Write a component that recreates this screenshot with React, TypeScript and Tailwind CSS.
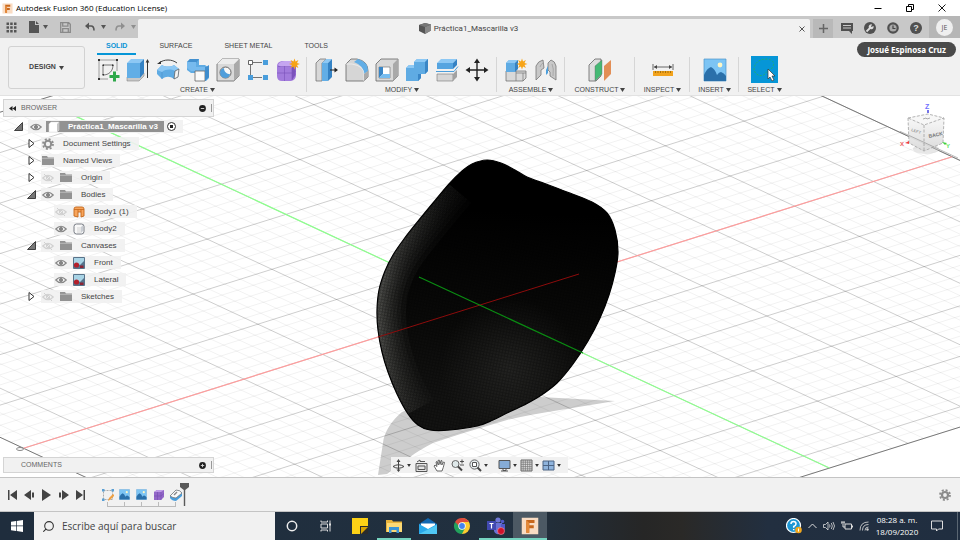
import React from "react";
import { Search } from "lucide-react";

const sans = "font-['Liberation_Sans',Arial,sans-serif]";
const segoe = "font-['Open_Sans','Noto_Sans',sans-serif]";

type SvgProps = { children: React.ReactNode; className?: string; box?: string };

function Svg({ children, className = "size-6", box = "0 0 24 24" }: SvgProps) {
  return (
    <svg viewBox={box} className={`shrink-0 ${className}`} fill="none" aria-hidden="true">
      {children}
    </svg>
  );
}

function Caret({ className = "w-[5px] h-[4px]" }: { className?: string }) {
  return (
    <Svg className={className} box="0 0 5 4">
      <path d="M0 0h5L2.5 4z" fill="currentColor" />
    </Svg>
  );
}

/* ---------- Ribbon icons ---------- */

const SketchIcon = (
  <Svg>
    <path d="M3 2h18M3 2v19h9M21 2v11" stroke="#888" strokeWidth=".8" />
    <path d="M7 7v10M7 7h10M17 7c0 6-4 10-10 10" stroke="#555" strokeWidth=".8" />
    <path d="M2 1h2v2H2zM20 1h2v2h-2zM2 20h2v2H2zM6.500 6.500H8V8H6.500zM16 6.500h1.500V8H16zM6.500 16H8v1.500H6.500z" fill="#333" />
    <path d="M17 13.500h3V17h3.500v3H20v3.500h-3V20h-3.500v-3H17z" fill="#2ea84a" />
  </Svg>
);
const ExtrudeIcon = (
  <Svg>
    <path d="M1 19h13l4-4v3l-5 5H1z" fill="#c9c9c9" stroke="#777" strokeWidth=".5" />
    <path d="M1 5h13v15H1z" fill="#62aee6" />
    <path d="M1 5l4-4h13l-4 4z" fill="#8dc8f4" />
    <path d="M14 5l4-4v14l-4 5z" fill="#3482c4" />
    <path d="M21.500 20V3" stroke="#333" strokeWidth="1" />
    <path d="M19.700 4.500L21.500 1l1.800 3.500z" fill="#333" />
  </Svg>
);
const RevolveIcon = (
  <Svg>
    <path d="M3 5c5-4 13-4 18 0" stroke="#444" strokeWidth="1" />
    <path d="M1 6l4-3v3z" fill="#333" />
    <path d="M1 12l5-5c3 2 9 2 12 0l5 4-1 8-4 2c-4-3-8-3-12 0l-5-5z" fill="#5fabe3" />
    <path d="M1 12l5-5c3 2 9 2 12 0l5 4-4 2c-4-2-9-2-13 1z" fill="#8dc8f4" />
    <path d="M19 13l4-2-1 8-4 2z" fill="#f4f4f4" stroke="#555" strokeWidth=".7" />
    <path d="M6 14v7" stroke="#4f94cb" strokeWidth=".7" />
  </Svg>
);
const SweepIcon = (
  <Svg>
    <path d="M1 4l3-3h9v6h6l4 3v10l-3 3h-5v-8H5l-4-3z" fill="#5fabe3" />
    <path d="M1 4l3-3h9l-3 4v4h10l3-2v3l-3 3H9V7H1z" fill="#4390cf" />
    <path d="M1 4h9v5h9v4H5l-4-3z" fill="#76baee" />
    <path d="M9 13h10v10H9z" fill="#fafafa" stroke="#666" strokeWidth=".8" />
    <path d="M19 13l4-3v9l-4 4z" fill="#3f8ccc" />
  </Svg>
);
const HoleIcon = (
  <Svg>
    <path d="M1 6l5-5h17v17l-5 5H1z" fill="#d9d9d9" stroke="#666" strokeWidth=".8" />
    <path d="M18 6l5-5v17l-5 5z" fill="#a9a9a9" />
    <path d="M1 6l5-5h17l-5 5z" fill="#ececec" />
    <circle cx="9.500" cy="14.500" r="5.500" fill="#f8f8f8" stroke="#555" strokeWidth=".9" />
    <path d="M8 10a5 5 0 1 0 6 6c-3 0-6-2-6-6z" fill="#4f9edb" />
  </Svg>
);
const PatternIcon = (
  <Svg>
    <path d="M4.500 7v10M7 4.500h9M7 19.500h9" stroke="#555" strokeWidth=".8" />
    <path d="M2.500 2.500h4v4h-4z" fill="#fff" stroke="#555" strokeWidth=".9" />
    <path d="M17 2h5v5h-5zM2 17h5v5H2zM17 17h5v5h-5z" fill="#4a9edc" />
  </Svg>
);
function Star({ x, y, s = 5 }: { x: number; y: number; s?: number }) {
  const points = Array.from({ length: 16 }, (_, i) => {
    const radius = i % 2 === 0 ? s : s * 0.5;
    const angle = (i * Math.PI) / 8;
    return `${x + radius * Math.sin(angle)},${y - radius * Math.cos(angle)}`;
  }).join(" ");
  return <polygon points={points} fill="#f7a416" />;
}
const FormIcon = (
  <Svg>
    <path d="M1 8q0-4 5-5h9q5 1 5 5v9q0 5-5 6H6q-5 0-5-5z" fill="#a27bdc" />
    <path d="M2 7q2-4 7-4h6q4 1 4 4l-3 2H5z" fill="#c5a5f0" />
    <path d="M16 9l3.500-2v10L16 22z" fill="#7d53bd" />
    <path d="M8.500 8v15M1 15h15l4-2M16 9v13M2 8.500h14l3.500-2" stroke="#7a52ba" strokeWidth=".6" />
    <Star x={18.500} y={6} s={5.500} />
  </Svg>
);
const PressPullIcon = (
  <Svg>
    <path d="M1 5l4-4h6L7 5v18H1z" fill="#d8d8d8" stroke="#666" strokeWidth=".7" />
    <path d="M7 5h6v18H7z" fill="#62aee6" />
    <path d="M7 5l4-4h6l-4 4z" fill="#8dc8f4" />
    <path d="M13 5l4-4v18l-4 4z" fill="#3482c4" />
    <path d="M15 12h6" stroke="#222" strokeWidth="1" />
    <path d="M19.500 9.500L23 12l-3.500 2.500z" fill="#222" />
  </Svg>
);
const FilletIcon = (
  <Svg>
    <path d="M1 6l5-5h6q11 2 11 12v6l-4 4H1z" fill="#d6d6d6" stroke="#666" strokeWidth=".8" />
    <path d="M9 4l4-3q10 3 10 12l-4 3Q18 7 9 4z" fill="#62aee6" />
    <path d="M1 6h6q12 2 12 10v7" stroke="#f4f4f4" strokeWidth=".7" />
    <path d="M19 16l4-3v6l-4 4z" fill="#aaa" />
  </Svg>
);
const ShellIcon = (
  <Svg>
    <path d="M1 6l5-5h17v17l-5 5H1z" fill="#d9d9d9" stroke="#666" strokeWidth=".8" />
    <path d="M18 6l5-5v17l-5 5z" fill="#a9a9a9" />
    <path d="M4 9h11v11H4z" fill="#fff" stroke="#666" strokeWidth=".6" />
    <path d="M4 9h4v7l-4 4z" fill="#3a86c6" />
    <path d="M8 16h7v4H4z" fill="#77bdf0" />
  </Svg>
);
const CombineIcon = (
  <Svg>
    <path d="M9 4l3-3h11v12l-3 3h-4v4l-3 3H1V10l3-3h5z" fill="#5fabe3" />
    <path d="M9 4l3-3h11l-3 3z" fill="#8dc8f4" />
    <path d="M20 4l3-3v12l-3 3h-4v4l-3 3v-7h7z" fill="#3a86c6" />
    <path d="M1 10l3-3h5v3z" fill="#8dc8f4" />
  </Svg>
);
const SplitIcon = (
  <Svg>
    <path d="M2 5l4-4h16l-4 4z" fill="#8dc8f4" />
    <path d="M2 5h16v6H2z" fill="#55a4e0" />
    <path d="M18 5l4-4v6l-4 4z" fill="#3482c4" />
    <path d="M1 13.500h18l4-5" stroke="#4a9edc" strokeWidth="1" />
    <path d="M2 16h16v7H2z" fill="#d6d6d6" stroke="#777" strokeWidth=".6" />
    <path d="M18 16l4-4v7l-4 4z" fill="#a2a2a2" />
  </Svg>
);
const MoveIcon = (
  <Svg>
    <path d="M12 3v18M3 12h18" stroke="#222" strokeWidth="1.400" />
    <path d="M12 .5l3 4.500H9zM12 23.500l3-4.500H9zM.5 12L5 9v6zM23.500 12L19 9v6z" fill="#222" />
  </Svg>
);
const ComponentIcon = (
  <Svg>
    <path d="M2 13h20v7l-3 3H2z" fill="#d9d9d9" stroke="#666" strokeWidth=".7" />
    <path d="M12 13v10M19 15v8M12 15h10" stroke="#777" strokeWidth=".7" />
    <path d="M2 5l3-3h9l-3 3v9H2z" fill="#5fabe3" />
    <path d="M2 5l3-3h9l-3 3z" fill="#8dc8f4" />
    <path d="M11 5l3-3v9l-3 3z" fill="#3482c4" />
    <Star x={18} y={6} s={5.500} />
  </Svg>
);
const JointIcon = (
  <Svg>
    <path d="M2 8q2-5 7-6l1 8-3 2v5l-5 5z" fill="#c8c8c8" stroke="#777" strokeWidth=".8" />
    <path d="M22 8q-1-5-5-6l-3 3v7l2 2v4l6 4z" fill="#c8c8c8" stroke="#777" strokeWidth=".8" />
    <path d="M6 9q1-3 3-4M18 6q2 4 1 12" stroke="#999" strokeWidth=".7" />
    <path d="M12 12l2-4v7l-2 2z" fill="#4a9edc" />
  </Svg>
);
const PlaneIcon = (
  <Svg>
    <path d="M1 7l6-6h6v17l-5 5H1z" fill="#dedede" stroke="#666" strokeWidth=".8" />
    <path d="M7 8l7-6v14l-7 7z" fill="#45b974" stroke="#666" strokeWidth=".4" />
    <path d="M16 8l7-6v14l-7 7z" fill="#e28e56" />
  </Svg>
);
const MeasureIcon = (
  <Svg>
    <path d="M2 6v6M22 6v6M3 9h18" stroke="#444" strokeWidth=".8" />
    <path d="M3 9l3-2v4zM21 9l-3-2v4z" fill="#444" />
    <path d="M2 13h20v5H2z" fill="#f2a31d" />
    <path d="M4.500 13v2M7 13v2M9.500 13v2M12 13v2M14.500 13v2M17 13v2M19.500 13v2" stroke="#8a5a00" strokeWidth=".7" />
  </Svg>
);

function PictureIcon({ className }: { className?: string }) {
  return (
    <Svg className={className}>
      <path d="M1 1h22v22H1z" fill="#7cc4f4" stroke="#4d95c9" strokeWidth=".7" />
      <circle cx="17" cy="7" r="2.400" fill="#fff6c4" />
      <path d="M1 17q3-7 7-8 4 2 6 8 2-3 4-3 3 1 5 4v5H1z" fill="#2a70aa" />
    </Svg>
  );
}

const SelectIcon = (
  <Svg className="size-[27px]" box="0 0 27 27">
    <path d="M0 0h27v27H0z" fill="#0696d7" />
    <path d="M3 14c0-7 5-11 13-11 7 1 8 5 5 9-2 3-5 2-7 6-3 3-9 2-11-4z" stroke="#1fae74" strokeWidth="1" strokeDasharray="2 1.500" />
    <path d="M17 13l7 7h-3l2 4-2 1-2-4-2 2z" fill="#fff" stroke="#333" strokeWidth=".7" />
  </Svg>
);

type Group = { label: string; width: string; icons: [string, React.ReactNode][] };
const groups: Group[] = [
  {
    label: "CREATE",
    width: "w-[219px]",
    icons: [
      ["Create sketch", SketchIcon],
      ["Extrude", ExtrudeIcon],
      ["Revolve", RevolveIcon],
      ["Sweep", SweepIcon],
      ["Hole", HoleIcon],
      ["Pattern", PatternIcon],
      ["Create form", FormIcon],
    ],
  },
  {
    label: "MODIFY",
    width: "w-[190px]",
    icons: [
      ["Press pull", PressPullIcon],
      ["Fillet", FilletIcon],
      ["Shell", ShellIcon],
      ["Combine", CombineIcon],
      ["Split body", SplitIcon],
      ["Move", MoveIcon],
    ],
  },
  { label: "ASSEMBLE", width: "w-[68px]", icons: [["New component", ComponentIcon], ["Joint", JointIcon]] },
  { label: "CONSTRUCT", width: "w-[70px]", icons: [["Offset plane", PlaneIcon]] },
  { label: "INSPECT", width: "w-[55px]", icons: [["Measure", MeasureIcon]] },
  { label: "INSERT", width: "w-[49px]", icons: [["Insert canvas", <PictureIcon key="p" />]] },
  { label: "SELECT", width: "w-[51px]", icons: [["Select", SelectIcon]] },
];

/* ---------- Title, tabs, ribbon ---------- */

function FusionLogo({ className }: { className?: string }) {
  return (
    <Svg className={className}>
      <path d="M1 1h22v22H1z" fill="#f9dcc3" />
      <path d="M7 4h11v4h-7v3h6v4h-6v6H7z" fill="#c8671c" />
      <path d="M7 4l4 4v13H7z" fill="#e58a3a" />
    </Svg>
  );
}

function TitleBar() {
  return (
    <header className="flex h-4 shrink-0 items-center bg-white pr-[2px] pl-[2px]">
      <FusionLogo className="size-[11px]" />
      <h1 className={`ml-[3px] text-[8px] leading-4 text-black ${segoe}`}>Autodesk Fusion 360 (Education License)</h1>
      <div className="ml-auto flex items-center text-black">
        <button aria-label="Minimize" className="flex w-8 justify-center">
          <Svg className="size-2" box="0 0 8 8"><path d="M.5 4.500h7" stroke="currentColor" /></Svg>
        </button>
        <button aria-label="Restore" className="flex w-8 justify-center">
          <Svg className="size-2" box="0 0 8 8"><path d="M.5 2.500h5v5h-5zM2.500 2.500v-2h5v5h-2" stroke="currentColor" /></Svg>
        </button>
        <button aria-label="Close" className="flex w-8 justify-center">
          <Svg className="size-2" box="0 0 8 8"><path d="M.5.5l7 7M7.500.5l-7 7" stroke="currentColor" strokeWidth=".9" /></Svg>
        </button>
      </div>
    </header>
  );
}

function TabBar() {
  return (
    <div className="flex h-[22px] shrink-0 bg-[#c8c8c8] pt-[3px]">
      <div className="flex w-[138px] shrink-0 items-center pb-[3px] pl-[6px] text-[#555]">
        <button aria-label="Data panel">
          <Svg className="size-[11px]" box="0 0 11 11">
            <path d="M.5.500h2.500v2.500H.5zM4.200.500h2.500v2.500H4.200zM8 .500h2.500v2.500H8zM.5 4.200h2.500v2.500H.5zM4.200 4.200h2.500v2.500H4.200zM8 4.200h2.500v2.500H8zM.5 8h2.500v2.500H.5zM4.200 8h2.500v2.500H4.200zM8 8h2.500v2.500H8z" fill="currentColor" />
          </Svg>
        </button>
        <button aria-label="File" className="ml-3 flex items-center gap-1">
          <Svg className="h-3 w-[10px]" box="0 0 10 12"><path d="M0 0h6v4h4v8H0zM7 0l3 3H7z" fill="currentColor" /></Svg>
          <Caret />
        </button>
        <button aria-label="Save" className="ml-3 text-[#8a8a8a]">
          <Svg className="size-[11px]" box="0 0 11 11">
            <path d="M.7.700h8l1.600 1.600v8H.7zM2.700.700v3.500h5.200V.700M2.700 10.300V6.700h5.600v3.600" stroke="currentColor" strokeWidth="1.300" />
          </Svg>
        </button>
        <button aria-label="Undo" className="ml-[14px] flex items-center gap-[6px]">
          <Svg className="size-[10px]" box="0 0 10 10">
            <path d="M2 4h4q3 0 3 4.500" stroke="currentColor" strokeWidth="1.600" /><path d="M0 4l4-3.500v7z" fill="currentColor" />
          </Svg>
          <Caret />
        </button>
        <button aria-label="Redo" className="ml-[9px] flex items-center gap-[6px] text-[#8f8f8f]">
          <Svg className="size-[10px]" box="0 0 10 10">
            <path d="M8 4H4Q1 4 1 8.500" stroke="currentColor" strokeWidth="1.600" /><path d="M10 4L6 .5v7z" fill="currentColor" />
          </Svg>
          <Caret />
        </button>
      </div>
      <div className="flex flex-1 items-center rounded-t-[2px] bg-[#f1f1f1]">
        <div className="flex flex-1 items-center justify-center gap-[3px]">
          <Svg className="h-[11px] w-3" box="0 0 12 11">
            <path d="M0 2l6-2 6 1.500v6L6 11 0 8z" fill="#555" /><path d="M6 4l6-2.500v6L6 11z" fill="#888" /><path d="M0 2l6-2 6 1.500L6 4z" fill="#777" />
          </Svg>
          <span className="font-['Roboto',Arial,sans-serif] text-[8px] leading-[10px] text-[#444]">Práctica1_Mascarilla v3</span>
        </div>
        <button aria-label="Close document" className="mr-[5px] text-[#555]">
          <Svg className="size-[6px]" box="0 0 6 6"><path d="M.5.500l5 5M5.500.500l-5 5" stroke="currentColor" /></Svg>
        </button>
      </div>
      <button aria-label="New tab" className="ml-[3px] flex w-5 items-center justify-center bg-[#b9b9b9] text-[#666]">
        <Svg className="size-[9px]" box="0 0 9 9"><path d="M4.500 0v9M0 4.500h9" stroke="currentColor" strokeWidth="1.500" /></Svg>
      </button>
      <div className="flex items-center gap-[11px] pr-[7px] pb-[2px] pl-2 text-[#505050]">
        <button aria-label="Comments">
          <Svg className="size-3" box="0 0 12 12"><path d="M0 1h12v8h-1v3L8 9H0z" fill="currentColor" /><path d="M2 3.500h8M2 6h8" stroke="#c8c8c8" strokeWidth="1" /></Svg>
        </button>
        <button aria-label="Extensions">
          <Svg className="size-3" box="0 0 12 12"><circle cx="6" cy="6" r="6" fill="currentColor" /><path d="M2.500 9.500L6 6" stroke="#ddd" strokeWidth="1.800" /><path d="M9.500 4L7.500 5 7 4.500 8 2.500A2.500 2.500 0 1 0 9.500 4z" fill="#ddd" /></Svg>
        </button>
        <button aria-label="Job status">
          <Svg className="size-3" box="0 0 12 12"><circle cx="6" cy="6" r="5.800" fill="currentColor" /><circle cx="6" cy="6" r="3.600" fill="#aaa" /><path d="M6 3.500V6.500h2.500" stroke="#444" strokeWidth="1.200" /></Svg>
        </button>
        <button aria-label="Help" className={`flex size-3 items-center justify-center rounded-full bg-[#505050] text-[9px] leading-3 font-bold text-[#ddd] ${sans}`}>?</button>
      </div>
      <div className="-mt-[3px] flex w-[31px] items-center justify-center bg-[#b6b6b6]">
        <button className={`size-[17px] rounded-full bg-[#efefef] text-[7px] leading-[17px] text-[#555] ${segoe}`}>JE</button>
      </div>
    </div>
  );
}

function Ribbon() {
  const tabs = ["SOLID", "SURFACE", "SHEET METAL", "TOOLS"];
  return (
    <div className={`relative flex h-[58px] shrink-0 border-b border-[#e2e2e2] bg-[#f1f1f1] text-[7px] text-[#444] ${sans}`}>
      <button className="mt-2 mr-[3px] ml-2 flex h-[43px] w-[77px] shrink-0 items-center justify-center gap-[3px] rounded-[3px] border border-[#d2d2d2] font-bold">
        DESIGN <Caret />
      </button>
      <div className="flex min-w-0 flex-1 flex-col">
        <nav className="flex h-[17px] gap-[14px] pl-[9px]">
          {tabs.map((tab, i) => (
            <button
              key={tab}
              className={`border-b-2 px-[9px] pt-[2px] ${i === 0 ? "border-[#0696d7] font-bold text-[#0a94d6]" : "border-transparent"}`}
            >
              {tab}
            </button>
          ))}
        </nav>
        <div className="flex">
          {groups.map((group) => (
            <section key={group.label} className={`relative flex shrink-0 flex-col items-center ${group.width}`}>
              <div className="flex h-[29px] items-center">
                {group.icons.map(([name, icon]) => (
                  <button key={name} aria-label={name} className="flex w-[30px] justify-center">{icon}</button>
                ))}
              </div>
              <button className="flex items-center gap-[2px] leading-[11px] whitespace-nowrap">
                {group.label} <Caret />
              </button>
              {group.label !== "SELECT" && <i className="absolute top-[2px] right-0 h-[35px] w-px bg-[#d6d6d6]" />}
            </section>
          ))}
        </div>
      </div>
      <div className="absolute top-1 right-1 rounded-full bg-[#4a4a4a] px-[10px] font-['Noto_Sans',sans-serif] text-[8px] leading-[15px] font-bold text-white">
        Josué Espinosa Cruz
      </div>
    </div>
  );
}

/* ---------- Model space ---------- */

const STEP_X = [78.7, -24.7];
const STEP_Y = [64.7, 30.2];
const at = (a: number, b: number) => [480 + a * STEP_X[0] + b * STEP_Y[0], 305 + a * STEP_X[1] + b * STEP_Y[1]];
const segment = (a1: number, b1: number, a2: number, b2: number) => {
  const [x1, y1] = at(a1, b1);
  const [x2, y2] = at(a2, b2);
  return `M${x1} ${y1}L${x2} ${y2}`;
};
const A_MIN = -29;
const A_MAX = 30;
const B_MIN = -34;
const B_MAX = 27;
let minorPath = "";
let majorPath = "";
for (let a = A_MIN; a <= A_MAX; a++) {
  const line = segment(a / 5, B_MIN / 5, a / 5, B_MAX / 5);
  if (a % 5 === 0) majorPath += line;
  else minorPath += line;
}
for (let b = B_MIN; b <= B_MAX; b++) {
  const line = segment(A_MIN / 5, b / 5, A_MAX / 5, b / 5);
  if (b % 5 === 0) majorPath += line;
  else minorPath += line;
}
const borderPath =
  segment(A_MIN / 5, B_MIN / 5, A_MAX / 5, B_MIN / 5) +
  segment(A_MIN / 5, B_MAX / 5, A_MAX / 5, B_MAX / 5) +
  segment(A_MIN / 5, B_MIN / 5, A_MIN / 5, B_MAX / 5) +
  segment(A_MAX / 5, B_MIN / 5, A_MAX / 5, B_MAX / 5);

/* Smooth curve through a list of points (Catmull-Rom). */
function curve(points: number[][], closed: boolean) {
  const n = points.length;
  const get = (i: number) => (closed ? points[(i + n) % n] : points[Math.max(0, Math.min(n - 1, i))]);
  let d = `M${points[0][0]} ${points[0][1]}`;
  for (let i = 0; i < (closed ? n : n - 1); i++) {
    const [p0, p1, p2, p3] = [get(i - 1), get(i), get(i + 1), get(i + 2)];
    d += `C${p1[0] + (p2[0] - p0[0]) / 6} ${p1[1] + (p2[1] - p0[1]) / 6} ${p2[0] - (p3[0] - p1[0]) / 6} ${p2[1] - (p3[1] - p1[1]) / 6} ${p2[0]} ${p2[1]}`;
  }
  return closed ? d + "Z" : d;
}

const leftEdge = [
  [472, 164], [461, 172], [449, 184], [433, 203], [419, 220], [404, 239], [393, 255], [385, 271],
  [379, 290], [377, 310], [378, 330], [382, 352], [388, 372], [397, 394], [408, 414],
];
const bodyPath = curve(
  [
    [487, 160], ...leftEdge, [418, 425], [430, 430], [450, 430], [477, 426], [493, 420], [507, 413], [524, 405],
    [540, 396], [557, 383], [573, 364], [588, 341], [600, 318], [609, 295], [615, 273], [618, 252], [615, 230],
    [607, 213], [592, 202], [567, 192], [546, 184], [527, 177], [515, 170], [501, 163],
  ],
  true,
);
const leftEdgePath = curve(leftEdge.slice(2), false);
const sheenWidths = [6, 10, 15, 20, 26, 32, 40, 48, 58];

function ModelView() {
  return (
    <svg viewBox="0 96 960 381" preserveAspectRatio="xMidYMid slice" className="absolute inset-0 size-full" fill="none" role="img" aria-label="3D model">
      <defs>
        <linearGradient id="body" gradientUnits="userSpaceOnUse" x1="480" y1="210" x2="470" y2="400">
          <stop offset="0" stopColor="#000" />
          <stop offset=".6" stopColor="#0a0a09" />
          <stop offset="1" stopColor="#131312" />
        </linearGradient>
        <radialGradient id="sheen" gradientUnits="userSpaceOnUse" cx="510" cy="368" r="70">
          <stop offset="0" stopColor="#2b2b29" stopOpacity=".7" />
          <stop offset="1" stopColor="#2b2b29" stopOpacity="0" />
        </radialGradient>
        <linearGradient id="rim" gradientUnits="userSpaceOnUse" x1="420" y1="190" x2="420" y2="420">
          <stop offset="0" stopColor="#cfd0c8" stopOpacity=".01" />
          <stop offset=".4" stopColor="#cfd0c8" stopOpacity=".045" />
          <stop offset=".65" stopColor="#cfd0c8" stopOpacity=".04" />
          <stop offset="1" stopColor="#cfd0c8" stopOpacity=".01" />
        </linearGradient>
        <pattern id="mesh" width="3" height="3" patternUnits="userSpaceOnUse" patternTransform="rotate(12)">
          <path d="M0 .5h3M.5 0v3" stroke="#000" strokeWidth=".8" />
        </pattern>
        <linearGradient id="face" x1="0" y1="0" x2="0" y2="1">
          <stop offset="0" stopColor="#f7f7f7" />
          <stop offset="1" stopColor="#d9d9d9" />
        </linearGradient>
        <clipPath id="bodyClip"><path d={bodyPath} /></clipPath>
      </defs>
      <path d="M0 96h960v381H0z" fill="#fff" />
      <path d="M378 475L383 443C384 432 392 420 402 412L430 400L540 397L615 401L560 410C541 413 524 416 507 420L467 432C455 436 444 439 433 443C424 448 416 452 410 457L387 474Z" fill="#cdcdcd" />
      <path d={minorPath} stroke="#000" strokeOpacity=".07" strokeWidth=".8" />
      <path d={majorPath} stroke="#000" strokeOpacity=".22" strokeWidth=".9" />
      <path d={borderPath} stroke="#777" strokeWidth="1" />
      <path d={segment(A_MIN / 5, 0, A_MAX / 5, 0)} stroke="#ff9c9c" strokeWidth="1.200" />
      <path d={segment(0, B_MIN / 5, 0, B_MAX / 5)} stroke="#8dff8d" strokeWidth="1.200" />
      <ellipse cx="20" cy="449" rx="3.500" ry="1.500" stroke="#888" />
      <path d={bodyPath} fill="url(#body)" />
      <g clipPath="url(#bodyClip)">
        <path d={bodyPath} fill="url(#sheen)" />
        {sheenWidths.map((w) => (
          <path key={w} d={leftEdgePath} stroke="url(#rim)" strokeWidth={w} />
        ))}
        <path d={bodyPath} fill="url(#mesh)" opacity=".3" />
      </g>
      <path d={bodyPath} stroke="#000" strokeWidth="1.200" />
      <path d="M378 337L579 274" stroke="#8c0c0c" />
      <path d="M419 277L583 353" stroke="#0a8c12" strokeWidth="1.200" />

      <g opacity=".92">
        <ellipse cx="926" cy="149" rx="13" ry="5" fill="#ccc" opacity=".5" />
        <path d="M908 118l20-4 16 4-20 7z" fill="#f7f7f7" />
        <path d="M908 118l16 7v26l-15-8z" fill="url(#face)" />
        <path d="M924 125l20-7-1 25-19 8z" fill="url(#face)" />
        <path d="M908 118l20-4 16 4-20 7zM908 118l1 25 15 8 19-8 1-25M924 125v26" stroke="#9b9b9b" strokeWidth=".8" strokeDasharray="3 1.500" />
      </g>
      <path d="M900 131.300L958 158" stroke="#777" strokeWidth=".5" />
      <g className="font-['Liberation_Sans',Arial,sans-serif] font-bold">
        <text x="929" y="138" fontSize="5" fill="#777" transform="rotate(-12 929 138)">BACK</text>
        <text x="911" y="131" fontSize="4" fill="#999" transform="rotate(18 911 131)">LEFT</text>
        <text x="925" y="109" fontSize="7" fill="#7070ff">Z</text>
        <text x="900" y="146" fontSize="6" fill="#f06060">X</text>
        <text x="946" y="148" fontSize="6" fill="#60e860">Y</text>
      </g>
      <path d="M928 110v3" stroke="#4646e0" strokeWidth="1.500" />
      <path d="M905 143l4-2v3z" fill="#f04040" />
      <path d="M942 142l5 1-2 2z" fill="#40d040" />
      <path d="M923 119l3-1 1 1 3-1" stroke="#999" strokeWidth=".8" />
    </svg>
  );
}

/* ---------- Browser tree ---------- */

function Eye({ off = false }: { off?: boolean }) {
  return (
    <Svg className="h-2 w-3" box="0 0 12 8">
      <g stroke={off ? "#d0d0d0" : "#858585"}>
        <path d="M.8 4Q6-1.500 11.200 4 6 9.500.8 4z" strokeWidth="1.200" />
        <circle cx="6" cy="4" r="1.600" fill={off ? "none" : "#858585"} />
        {off && <path d="M2 0l8 8" />}
      </g>
    </Svg>
  );
}
const Folder = (
  <Svg className="h-[9px] w-3" box="0 0 12 9"><path d="M0 0h5l1 1.500h6V9H0z" fill="#929292" /><path d="M0 2.300h12" stroke="#c9c9c9" strokeWidth=".7" /></Svg>
);
const Gear = (
  <Svg className="size-3" box="0 0 12 12">
    <circle cx="6" cy="6" r="3.200" stroke="#8c8c8c" strokeWidth="2" />
    <circle cx="6" cy="6" r="5" stroke="#8c8c8c" strokeWidth="1.800" strokeDasharray="2 1.930" />
  </Svg>
);
const SurfaceBody = (
  <Svg className="size-3" box="0 0 12 12">
    <path d="M1 3q0-2 2-2h6q2 0 2 2v7l-3 1V6H5v5l-4-1z" fill="#f7a55c" stroke="#c4661a" strokeWidth=".9" />
    <path d="M1 3.500h4V6M5 3.500h6M8 6V3.500" stroke="#c4661a" strokeWidth=".8" />
  </Svg>
);
const SolidBody = (
  <Svg className="size-3" box="0 0 12 12">
    <path d="M1 3.500Q1 1 3.500 1h5Q11 1 11 3.500v5Q11 11 8.500 11h-5Q1 11 1 8.500z" fill="#f8f8f8" stroke="#6b7079" strokeWidth=".9" />
    <path d="M4 4h4v6H4z" fill="#e6e6e6" /><path d="M8 4l2-2v6L8 10z" fill="#c9cdd3" />
  </Svg>
);
const CanvasItem = (
  <Svg className="size-3" box="0 0 12 12">
    <path d="M.5.500h11v11H.5z" fill="#a9d4e6" stroke="#59738a" /><path d="M1 8l3-2 3 2 4-4v7H1z" fill="#55738c" />
    <circle cx="3.500" cy="8" r="2.600" fill="#b3202c" /><path d="M7 8.500h3.500V11H7z" fill="#8c2434" />
  </Svg>
);
const Cube = (
  <Svg className="size-3" box="0 0 12 12">
    <path d="M1 3l2-2h8v8l-2 2H1z" fill="#fff" stroke="#dedede" strokeWidth=".5" /><path d="M9 3l2-2v8l-2 2z" fill="#c5c5c5" />
  </Svg>
);

type Node = { label: string; depth: 1 | 2; open?: boolean; eye?: "on" | "off"; icon: React.ReactNode };
const nodes: Node[] = [
  { label: "Document Settings", depth: 1, open: false, icon: Gear },
  { label: "Named Views", depth: 1, open: false, icon: Folder },
  { label: "Origin", depth: 1, open: false, eye: "off", icon: Folder },
  { label: "Bodies", depth: 1, open: true, eye: "on", icon: Folder },
  { label: "Body1 (1)", depth: 2, eye: "off", icon: SurfaceBody },
  { label: "Body2", depth: 2, eye: "on", icon: SolidBody },
  { label: "Canvases", depth: 1, open: true, eye: "off", icon: Folder },
  { label: "Front", depth: 2, eye: "on", icon: CanvasItem },
  { label: "Lateral", depth: 2, eye: "on", icon: CanvasItem },
  { label: "Sketches", depth: 1, open: false, eye: "off", icon: Folder },
];

function Expander({ open }: { open: boolean }) {
  return (
    <button aria-label={open ? "Collapse" : "Expand"} className="mr-1 flex w-3 justify-center">
      <Svg className="h-[9px] w-[9px]" box="0 0 9 9">
        {open ? <path d="M8.500.500v8H.5z" fill="#777" stroke="#222" strokeWidth=".8" /> : <path d="M2 .5l5 4-5 4z" fill="#fff" stroke="#333" strokeWidth="1" />}
      </Svg>
    </button>
  );
}

function Panel({ title, open, className }: { title: string; open: boolean; className: string }) {
  return (
    <div className={`flex w-[211px] items-center border border-[#d4d4d4] bg-[#f1f1f1] text-[7px] text-[#666] ${className}`}>
      <span className="flex w-[17px] justify-center">
        {open && (
          <Svg className="h-[5px] w-[7px]" box="0 0 7 5"><path d="M3.500 0v5L0 2.500zM7 0v5L3.500 2.500z" fill="#222" /></Svg>
        )}
      </span>
      <h2 className="flex-1">{title}</h2>
      <button aria-label={open ? `Collapse ${title}` : `Expand ${title}`}>
        <Svg className="size-[7px]" box="0 0 7 7">
          <circle cx="3.500" cy="3.500" r="3.400" fill="#222" />
          <path d={open ? "M1.800 3.500h3.400" : "M1.800 3.500h3.400M3.500 1.800v3.400"} stroke="#ddd" strokeWidth=".9" />
        </Svg>
      </button>
      <i className="ml-[5px] h-2 w-[2px] border-l border-[#999]" />
    </div>
  );
}

function BrowserTree() {
  return (
    <div className={`absolute top-[3px] left-[3px] text-[8px] text-[#444] ${sans}`}>
      <Panel title="BROWSER" open className="h-[18px]" />
      <ul className="mt-[1px]">
        <li className="flex h-[17px] items-center pl-[9px]">
          <Expander open />
          <div className="flex h-[13px] items-center bg-[#f1f1f1]/90 pr-1">
            <span className="flex w-[15px] justify-center"><Eye /></span>
            <span className="ml-[3px] flex h-[11px] items-center gap-2 bg-[#929292] pr-[6px] pl-[2px] font-bold text-white">
              {Cube} Práctica1_Mascarilla v3
            </span>
            <input type="radio" name="active" defaultChecked aria-label="Activate component" className="mx-[3px] size-[9px] appearance-none rounded-full border border-[#333] bg-[radial-gradient(#222_30%,white_38%)]" />
          </div>
        </li>
        {nodes.map((node) => (
          <li key={node.label} className={`flex h-[17px] items-center ${node.depth === 1 ? "pl-[22px]" : "pl-[51px]"}`}>
            {node.depth === 1 && <Expander open={!!node.open} />}
            <div className="flex h-[13px] items-center gap-1 bg-[#f1f1f1]/90 pr-2">
              {node.eye && <span className="flex w-[14px] justify-center"><Eye off={node.eye === "off"} /></span>}
              <span className="flex w-[14px] justify-center">{node.icon}</span>
              <span className="ml-1 leading-[13px]">{node.label}</span>
            </div>
          </li>
        ))}
      </ul>
    </div>
  );
}

/* ---------- Navigation bar ---------- */

const OrbitIcon = (
  <Svg className="size-[13px]" box="0 0 13 13">
    <path d="M6.500 1v11M1 7.500Q6.500 4 12 7.500 6.500 11 1 7.500z" stroke="#444" strokeWidth="1" />
    <path d="M4.500 3l2-3 2 3zM4.500 10.500l2 2.500 2-2.500z" fill="#444" />
  </Svg>
);
const LookIcon = (
  <Svg className="size-[13px]" box="0 0 13 13">
    <path d="M1 4.500h11v8H1zM3 7h7v3.500H3z" fill="#e4e4e4" stroke="#555" /><path d="M2 3l3-2v1.500h5" stroke="#555" />
  </Svg>
);
const PanIcon = (
  <Svg className="size-[13px]" box="0 0 13 13">
    <path d="M4 12L1 7l1-1 2 1.500L3 3l1-.5L5.300 6 5 1.500 6.200 1 7 5.500 8 1.500l1 .3L8.800 6l1.700-3 1 .4-1.200 5L9 12z" fill="#fff" stroke="#444" strokeWidth=".8" />
  </Svg>
);
const ZoomIcon = (
  <Svg className="size-[13px]" box="0 0 13 13">
    <circle cx="4.500" cy="5" r="3.500" fill="#dfe9ea" stroke="#666" /><path d="M7 7.500l4 4" stroke="#444" strokeWidth="2" />
    <path d="M9 2.500h4M11 .5v4M9 6h4" stroke="#444" strokeWidth=".9" />
  </Svg>
);
const FitIcon = (
  <Svg className="size-[13px]" box="0 0 13 13">
    <circle cx="5.500" cy="5.500" r="4.600" fill="#e6ecee" stroke="#666" /><path d="M8.500 8.500l3.500 3.500" stroke="#444" strokeWidth="2" /><path d="M3.500 3.500h4v4h-4z" stroke="#555" fill="#fff" />
  </Svg>
);
const DisplayIcon = (
  <Svg className="size-[13px]" box="0 0 13 13">
    <path d="M1 1.500h11v8H1z" fill="#86acd6" stroke="#555" /><path d="M5 9.500h3v2H5zM3 12h7" stroke="#555" />
  </Svg>
);
const GridIcon = (
  <Svg className="size-[13px]" box="0 0 13 13">
    <path d="M1 1h11v11H1z" fill="#ddd" stroke="#666" /><path d="M3.200 1v11M5.400 1v11M7.600 1v11M9.800 1v11M1 3.200h11M1 5.400h11M1 7.600h11M1 9.800h11" stroke="#777" strokeWidth=".7" />
  </Svg>
);
const ViewportIcon = (
  <Svg className="size-[13px]" box="0 0 13 13">
    <path d="M1 2h11v9H1z" fill="#8fb4dd" stroke="#4c6484" /><path d="M6.500 2v9M1 6.500h11" stroke="#4c6484" strokeWidth="1" />
  </Svg>
);

function NavBar() {
  const tools: [string, React.ReactNode, boolean, string][] = [
    ["Orbit", OrbitIcon, true, "mr-1"],
    ["Look at", LookIcon, false, "mr-[5px]"],
    ["Pan", PanIcon, false, "mr-[5px]"],
    ["Zoom", ZoomIcon, false, "mr-[5px]"],
    ["Fit", FitIcon, true, "mr-[10px]"],
    ["Display settings", DisplayIcon, true, "mr-[3px]"],
    ["Grid and snaps", GridIcon, true, "mr-[3px]"],
    ["Viewports", ViewportIcon, true, ""],
  ];
  return (
    <div className="absolute bottom-1 left-[391px] flex h-4 w-[177px] items-center bg-[#f1f1f1] pl-[1px] text-[#333]">
      {tools.map(([name, icon, menu, gap]) => (
        <button key={name} aria-label={name} className={`flex items-center gap-[2px] ${gap}`}>
          {icon}
          {menu && <Caret className="h-[3px] w-1" />}
        </button>
      ))}
    </div>
  );
}

/* ---------- Timeline ---------- */

function Timeline() {
  const controls: [string, string][] = [
    ["Go to start", "M1 1h1.500v10H1zM10 1v10L3 6z"],
    ["Step back", "M7 1v10L0 6zM8 3.500h2v5H8z"],
    ["Play", "M1 0l9 6-9 6z"],
    ["Step forward", "M4 1l7 5-7 5zM1 3.500h2v5H1z"],
    ["Go to end", "M1 1l7 5-7 5zM8.500 1H10v10H8.500z"],
  ];
  const features: [string, React.ReactNode][] = [
    ["Sketch", (
      <Svg key="s" className="size-3" box="0 0 12 12">
        <path d="M1.500 1.500h9v9h-9z" stroke="#aaa" strokeDasharray="2 1" /><path d="M0 0h2.500v2.500H0zM9.500 0H12v2.500H9.500zM0 9.500h2.500V12H0z" fill="#5a9fd4" /><path d="M6 12l1-3 4-4 1.500 1.500-4 4z" fill="#f0a040" />
      </Svg>
    )],
    ["Front canvas", <PictureIcon key="a" className="size-[11px]" />],
    ["Lateral canvas", <PictureIcon key="b" className="size-[11px]" />],
    ["Form", (
      <Svg key="f" className="size-3" box="0 0 12 12">
        <path d="M1 3l3-2h7v7l-3 3H1z" fill="#9468c8" /><path d="M1 3l3-2h7L8 3z" fill="#c09be8" /><path d="M4.500 3v8M1 7h7l3-2.500M8 3v8" stroke="#7a50b5" strokeWidth=".7" />
      </Svg>
    )],
    ["Thicken", (
      <Svg key="t" className="size-3" box="0 0 12 12">
        <path d="M0 7l6-6q4 0 6 3v3l-6 5q-4 0-6-3z" fill="#4a9edc" /><path d="M0 7l6-6q4 0 6 3L6 9Q3 9 0 7z" fill="#fafafa" stroke="#777" strokeWidth=".8" /><path d="M4 6l3-3" stroke="#888" strokeWidth="1.500" />
      </Svg>
    )],
  ];
  return (
    <div className="flex h-[35px] shrink-0 items-center border-t border-b border-[#c4c4c4] bg-[#f1f1f1] px-[6px] text-[#444]">
      <div className="flex gap-[5px]">
        {controls.map(([name, d]) => (
          <button key={name} aria-label={name} className="flex w-3 justify-center">
            <Svg className="h-3 w-[11px]" box="0 0 11 12"><path d={d} fill="currentColor" /></Svg>
          </button>
        ))}
      </div>
      <div className="ml-[15px] flex flex-col pt-[6px]">
        <div className="flex gap-1">
          {features.map(([name, icon]) => (
            <button key={name} aria-label={name} className="flex size-[13px] items-center justify-center">{icon}</button>
          ))}
        </div>
        <div className="mx-[6px] mt-[1px] flex h-[5px] border-b border-l border-[#bbb]">
          <i className="flex-1 border-r border-[#bbb]" />
          <i className="flex-1 border-r border-[#bbb]" />
          <i className="flex-1 border-r border-[#bbb]" />
          <i className="flex-1 border-r border-[#bbb]" />
        </div>
      </div>
      <Svg className="-ml-[2px] h-[23px] w-[9px]" box="0 0 9 23"><path d="M0 0h9v4L5.200 7v16H3.800V7L0 4z" fill="#5a5a5a" /></Svg>
      <button aria-label="Timeline settings" className="mr-[3px] ml-auto">
        <Svg className="size-3" box="0 0 12 12">
          <circle cx="6" cy="6" r="3" stroke="#8c8c8c" strokeWidth="2.200" />
          <circle cx="6" cy="6" r="5" stroke="#8c8c8c" strokeWidth="1.800" strokeDasharray="2 1.930" />
        </Svg>
      </button>
    </div>
  );
}

/* ---------- Taskbar ---------- */

function Taskbar() {
  const apps: [string, string, React.ReactNode][] = [
    ["Cortana", "border-transparent", <Svg key="0" className="size-3" box="0 0 12 12"><circle cx="6" cy="6" r="4.700" stroke="#eee" strokeWidth="1.500" /></Svg>],
    ["Task view", "border-transparent", (
      <Svg key="1" className="size-3" box="0 0 12 12"><path d="M1 4h6.500v4H1zM1 .500v1.500h6.500V.500M1 11.500V10h6.500v1.500M10 .500v11" stroke="#ddd" /><path d="M9 3.500h2v2H9z" fill="#ddd" /></Svg>
    )],
    ["Sticky notes", "border-transparent", <Svg key="2" className="size-4" box="0 0 16 16"><path d="M0 0h16v9l-7 7H0z" fill="#fcd116" /><path d="M8 8h8v8H8z" fill="#2b2b2b" /><path d="M9 16V9h7z" fill="#d9a400" /></Svg>],
    ["File explorer", "border-[#76d4c0]", (
      <Svg key="3" className="size-4" box="0 0 16 16"><path d="M0 2h6l1 1.500h9V14H0z" fill="#e8b33c" /><path d="M1 5h15v9H1z" fill="#fcd975" /><path d="M3 9h10v6h-2.500v-3h-5v3H3z" fill="#3a94d6" /></Svg>
    )],
    ["Mail", "border-transparent", <Svg key="4" className="h-4 w-[18px]" box="0 0 18 16"><path d="M0 6l9-6 9 6v9H0z" fill="#1167b1" /><path d="M2 5.500h14v6H2z" fill="#fff" /><path d="M0 6l9 5 9-5v10H0z" fill="#28a8ea" /><path d="M0 16l18-9v9z" fill="#50c8f5" /></Svg>],
    ["Chrome", "border-transparent", (
      <Svg key="5" className="size-4" box="0 0 16 16">
        <path d="M8 8V0A8 8 0 0 1 8 16z" fill="#fccc30" /><path d="M8 8l-6.930-4A8 8 0 0 0 8 16l3-6z" fill="#22a15c" /><path d="M1.070 4A8 8 0 0 1 14.930 4H8L5 8z" fill="#dd4b3e" /><circle cx="8" cy="8" r="3.700" fill="#fff" /><circle cx="8" cy="8" r="2.900" fill="#4384f0" />
      </Svg>
    )],
    ["Teams", "border-[#76d4c0]", (
      <Svg key="6" className="size-[18px]" box="0 0 18 18">
        <circle cx="11" cy="3" r="2.600" fill="#7078d8" /><circle cx="15.500" cy="4.500" r="1.800" fill="#5059c9" /><path d="M7 6h8v6a4 4 0 0 1-8 2z" fill="#6a72d4" /><path d="M14 7h4v5a3 3 0 0 1-4 2z" fill="#5059c9" /><path d="M0 4h9v9H0z" fill="#4149b0" /><path d="M2.500 6.500h4M4.500 6.500v5" stroke="#fff" strokeWidth="1.200" /><circle cx="14" cy="14" r="3.500" fill="#d0112b" stroke="#e8a0a8" strokeWidth=".6" />
      </Svg>
    )],
    ["Fusion 360", "border-[#76d4c0] bg-[#4c5964]", <FusionLogo key="7" className="size-[18px]" />],
  ];
  return (
    <footer className={`flex h-7 shrink-0 items-center bg-[linear-gradient(90deg,#1f2d3d_0%,#21303f_55%,#262626_67%,#2a2927_71%,#222f40_80%,#202e40_100%)] text-white ${segoe}`}>
      <button aria-label="Start" className="flex h-full w-[34px] items-center justify-center">
        <Svg className="size-3" box="0 0 12 12"><path d="M0 1.700l5-.7v4.600H0zM5.700.900L12 0v5.600H5.700zM0 6.300h5v4.700l-5-.7zM5.700 6.300H12V12l-6.300-.9z" fill="#fff" /></Svg>
      </button>
      <label className="flex h-full w-[241px] items-center bg-[#f1f1f1] pl-2">
        <Search className="size-[13px] -scale-x-100 text-[#333]" strokeWidth={2} />
        <input type="text" aria-label="Buscar" placeholder="Escribe aquí para buscar" className="ml-[7px] min-w-0 flex-1 bg-transparent text-[10px] outline-none placeholder:text-[#444]" />
      </label>
      <nav className="flex h-full">
        {apps.map(([name, style, icon]) => (
          <button key={name} aria-label={name} className={`flex w-[34px] items-center justify-center border-b-2 pt-[1px] ${style}`}>{icon}</button>
        ))}
      </nav>
      <div className="ml-auto flex h-full items-center">
        <button aria-label="Support" className="mr-[6px]">
          <Svg className="size-4" box="0 0 16 16">
            <circle cx="7.500" cy="7.500" r="7" fill="#1d96d3" stroke="#fff" strokeWidth="1.200" /><path d="M5 6q0-2.500 2.500-2.500T10 6q0 1.300-2.300 2.500v1.200M7.700 11v1.300" stroke="#fff" strokeWidth="1.500" /><circle cx="12.500" cy="12" r="3.300" fill="#f2a71d" /><path d="M12.500 10.500v3" stroke="#fff" />
          </Svg>
        </button>
        <button aria-label="Show hidden icons" className="mr-[6px]"><Svg className="h-[6px] w-[9px]" box="0 0 9 6"><path d="M.5 5l4-4 4 4" stroke="#ddd" /></Svg></button>
        <button aria-label="Volume" className="mr-[6px]"><Svg className="h-[10px] w-3" box="0 0 12 10"><path d="M.5 3.500h2L5 1v8L2.500 6.500h-2zM6.500 3.500q1 1.500 0 3M8.300 2q2 3 0 6M10 1q3 4 0 8" stroke="#ddd" strokeWidth=".8" /></Svg></button>
        <button aria-label="Battery" className="mr-[6px]"><Svg className="h-[10px] w-3" box="0 0 12 10"><path d="M4 3h6.500v5H4zM11.500 4.500v2M0 2h4M1 0v2M3 0v2M2 3v3h2" stroke="#ddd" /></Svg></button>
        <button aria-label="Wi-Fi" className="mr-[6px]"><Svg className="size-[10px]" box="0 0 10 10"><path d="M1 9.500Q1 1 9.500 1M3.500 9.500q0-6 6-6M6 9.500Q6 6 9.500 6" stroke="#ccc" strokeWidth=".9" /><circle cx="8.500" cy="8.500" r="1.200" fill="#ccc" /></Svg></button>
        <div className="flex w-[44px] flex-col items-center text-[8px] leading-3 whitespace-nowrap">
          <time>08:28 a. m.</time>
          <time>18/09/2020</time>
        </div>
        <button aria-label="Notifications" className="mr-[14px] ml-3"><Svg className="size-3" box="0 0 12 12"><path d="M.5 1h11v8h-4L5.500 11V9h-5z" stroke="#ddd" /></Svg></button>
        <i className="mr-[2px] h-full w-px bg-[#5a6672]" />
      </div>
    </footer>
  );
}

export default function App() {
  return (
    <div className={`flex h-screen w-full flex-col overflow-hidden bg-[#f1f1f1] ${sans}`}>
      <TitleBar />
      <TabBar />
      <Ribbon />
      <main className="relative min-h-0 flex-1 overflow-hidden">
        <ModelView />
        <BrowserTree />
        <Panel title="COMMENTS" open={false} className="absolute bottom-1 left-[3px] h-4" />
        <NavBar />
      </main>
      <Timeline />
      <Taskbar />
    </div>
  );
}
